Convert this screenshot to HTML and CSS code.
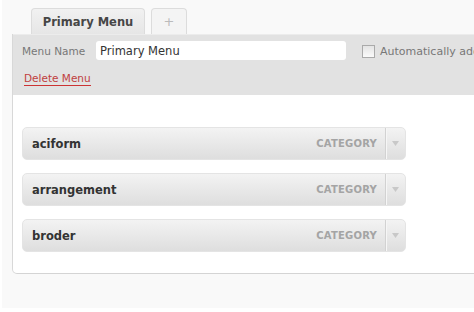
FILE: index.html
```html
<!DOCTYPE html>
<html>
<head>
<meta charset="utf-8">
<link rel="stylesheet" href="styles.css">
</head>
<body>
<div class="page">
  <div class="tabs">
    <div class="tab active">Primary Menu</div>
    <div class="tab plus">+</div>
  </div>
  <div class="panel">
    <div class="head">
      <div class="row">
        <span class="label">Menu Name</span>
        <div class="input">Primary Menu</div>
        <span class="check"></span>
        <span class="auto">Automatically add new top-level pages</span>
      </div>
      <a class="delete">Delete Menu</a>
    </div>
    <div class="body">
      <div class="item"><span class="title">aciform</span><span class="type">Category</span><span class="arrow"><svg width="7" height="5" viewBox="0 0 7 5"><path d="M0 0H7L3.5 5Z" fill="#c8c8c8"/></svg></span></div>
      <div class="item"><span class="title">arrangement</span><span class="type">Category</span><span class="arrow"><svg width="7" height="5" viewBox="0 0 7 5"><path d="M0 0H7L3.5 5Z" fill="#c8c8c8"/></svg></span></div>
      <div class="item"><span class="title">broder</span><span class="type">Category</span><span class="arrow"><svg width="7" height="5" viewBox="0 0 7 5"><path d="M0 0H7L3.5 5Z" fill="#c8c8c8"/></svg></span></div>
    </div>
  </div>
</div>
</body>
</html>
```
FILE: styles.css
```css
html, body { margin: 0; padding: 0; background: #fff; overflow: hidden; }
body { font-family: "DejaVu Sans", Verdana, sans-serif; }
.page {
  margin-left: 2px;
  width: 472px;
  height: 308px;
  background: #f9f9f9;
  padding-top: 8px;
  box-sizing: border-box;
  overflow: hidden;
}
.tabs { display: flex; gap: 6px; margin-left: 29px; height: 26px; }
.tab {
  border: 1px solid #dcdcdc;
  border-bottom: none;
  border-radius: 4px 4px 0 0;
  box-sizing: border-box;
  height: 26px;
  display: flex; align-items: center; justify-content: center;
}
.tab.active {
  width: 114px;
  background: linear-gradient(#f1f1f1, #e6e6e6);
  font-weight: bold; font-size: 11.5px; color: #464646;
}
.tab.plus {
  width: 36px;
  background: #f4f4f4;
  color: #bbb; font-size: 13px;
}
.panel {
  margin-left: 10px;
  width: 520px;
  border-left: 1px solid #d8d8d8;
  border-bottom: 1px solid #d4d4d4;
  border-radius: 0 0 0 5px;
  background: #fff;
}
.head {
  background: #e2e2e2;
  border-top: 1px solid #ececec;
  height: 61px;
  box-sizing: border-box;
  padding: 5px 0 0 9px;
  overflow: hidden;
}
.row { display: flex; align-items: center; height: 20px; }
.row > * { flex-shrink: 0; }
.label { font-size: 10.5px; color: #777; width: 74px; padding-top: 2px; }
.input {
  width: 250px; height: 19px; box-sizing: border-box;
  background: #fff; border-radius: 3px;
  font-size: 11.5px; color: #333;
  padding: 3px 0 0 4px;
}
.check {
  width: 11px; height: 11px;
  border: 1px solid #aaa;
  background: linear-gradient(#e4e4e4, #fafafa);
  margin: 2px 0 0 16px;
}
.auto { font-size: 11px; color: #777; margin: 2px 0 0 5px; white-space: nowrap; }
.delete {
  display: inline-block;
  margin: 12px 0 0 2px;
  font-size: 10.5px; color: #c04040;
  border-bottom: 1px solid #c33;
  line-height: 12px;
  padding-bottom: 1px;
}
.body {
  padding: 32px 0 21px 9px;
  display: flex; flex-direction: column; gap: 13px;
}
.item {
  width: 384px; height: 33px; box-sizing: border-box;
  border: 1px solid #e4e4e4;
  border-radius: 5px;
  background: linear-gradient(#f3f3f3, #dedede);
  display: flex; align-items: center;
}
.title { font-weight: bold; font-size: 11.5px; color: #333; padding-left: 9px; flex: 1; }
.type {
  text-transform: uppercase; font-weight: bold; font-size: 10px; color: #a4a4a4;
  letter-spacing: 0.2px;
  padding-right: 8px;
}
.arrow {
  width: 19px; height: 31px;
  border-left: 1px solid #d2d2d2;
  box-shadow: inset 1px 0 0 #f6f6f6;
  display: flex; align-items: center; justify-content: center;
}
```
